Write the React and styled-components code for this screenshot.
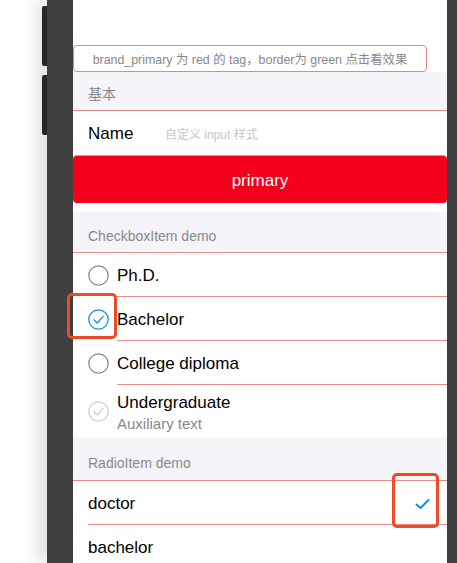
import React from 'react';
import styled, { createGlobalStyle } from 'styled-components';

const GlobalStyle = createGlobalStyle`
	html, body {
		margin: 0;
		padding: 0;
		background: #fff;
		overflow: hidden;
	}
	body {
		font-family: "Liberation Sans", "Noto Sans CJK SC", sans-serif;
	}
`;

const Stage = styled.div`
	display: flex;
	height: 563px;
	width: 457px;
	overflow: hidden;
`;

const Side = styled.div`
	width: 47px;
	display: flex;
	flex-direction: column;
	align-items: flex-end;
	padding-top: 6px;
	gap: 9px;
	box-sizing: border-box;
`;

const SideKey = styled.div`
	width: 5px;
	height: 60px;
	background: #2c2c2c;
	border-radius: 2px 0 0 2px;
`;

const Bezel = styled.div`
	width: ${(props) => props.w}px;
	background: #3f3f3f;
	box-shadow: ${(props) => (props.left ? '-10px 0 18px rgba(0,0,0,0.12)' : 'none')};
	flex-shrink: 0;
`;

const Screen = styled.div`
	width: 374px;
	flex-shrink: 0;
	display: flex;
	flex-direction: column;
	background: #fff;
	position: relative;

	& > * {
		flex-shrink: 0;
	}
`;

const Top = styled.div`
	height: 45px;
`;

const Tag = styled.div`
	width: 354px;
	height: 27px;
	box-sizing: border-box;
	border: 1px solid #e28585;
	border-radius: 4px;
	display: flex;
	align-items: center;
	justify-content: center;
	font-size: 12.4px;
	color: #888;
`;

const Header = styled.div`
	height: ${(props) => props.h}px;
	box-sizing: border-box;
	background: #f5f5f9;
	border-bottom: 1px solid #e68a8a;
	display: flex;
	align-items: flex-end;
	padding: 0 0 ${(props) => props.pb}px 15px;
	font-size: 14px;
	color: #888;
`;

const Row = styled.div`
	position: relative;
	height: ${(props) => props.h || 44}px;
	display: flex;
	align-items: center;
	padding-left: 15px;
`;

const Line = styled.div`
	display: flex;
	flex: 1;
	align-self: stretch;
	align-items: center;
	border-bottom: ${(props) => (props.last ? 'none' : '1px solid #e68a8a')};
	font-size: 17px;
	color: #000;
	padding: 2px 15px 0 0;
`;

const Label = styled.span`
	width: 77px;
	font-size: 17px;
	color: #000;
	padding-top: 2px;
`;

const Placeholder = styled.span`
	font-size: 12px;
	color: #c7c7c7;
`;

const Primary = styled.div`
	height: 48px;
	box-sizing: border-box;
	border-top: 1px solid #f29090;
	background: #f5001a;
	border-radius: 4px;
	color: #fff;
	font-size: 17px;
	display: flex;
	align-items: center;
	justify-content: center;
	padding-top: 2px;
`;

const Gap = styled.div`
	height: 9px;
`;

const Box = styled.span`
	width: 29px;
	display: flex;
	align-items: center;
	flex-shrink: 0;
`;

const Texts = styled.div`
	display: flex;
	flex-direction: column;
	justify-content: center;
	gap: 2px;
`;

const Brief = styled.span`
	font-size: 15px;
	color: #888;
`;

const Mark = styled.div`
	position: absolute;
	left: ${(props) => props.x}px;
	top: ${(props) => props.y}px;
	width: ${(props) => props.w}px;
	height: ${(props) => props.h}px;
	box-sizing: border-box;
	border: 3px solid #ee4b24;
	border-radius: 5px;
`;

const Check = styled.span`
	margin-left: auto;
	margin-right: 2px;
	display: flex;
`;

const CircleCheck = ({ state }) => {
	const color = state === 'on' ? '#108ee9' : state === 'off' ? '#cfcfcf' : '#888';
	return (
		<svg width="21" height="21" viewBox="0 0 21 21">
			<circle cx="10.5" cy="10.5" r="9.7" fill="none" stroke={color} strokeWidth="1.3" />
			{state !== 'empty' && (
				<path d="M6 10.8 L9.2 14 L15.2 7.4" fill="none" stroke={color} strokeWidth="1.3" strokeLinecap="round" strokeLinejoin="round" />
			)}
		</svg>
	);
};

const Tick = () => (
	<svg width="15" height="12" viewBox="0 0 15 12">
		<path d="M1.5 6.5 L5.5 10 L13.5 2" fill="none" stroke="#108ee9" strokeWidth="2" strokeLinecap="round" strokeLinejoin="round" />
	</svg>
);

const checkItems = [
	{ label: 'Ph.D.', state: 'empty' },
	{ label: 'Bachelor', state: 'on', mark: true },
	{ label: 'College diploma', state: 'empty' },
];

const App = () => {
	return (
		<>
			<GlobalStyle />
			<Stage>
				<Side>
					<SideKey />
					<SideKey />
				</Side>
				<Bezel w={26} left />
				<Screen>
					<Top />
					<Tag>brand_primary 为 red 的 tag，border为 green 点击看效果</Tag>
					<Header h={39} pb={7}>基本</Header>
					<Row>
						<Label>Name</Label>
						<Placeholder>自定义 input 样式</Placeholder>
					</Row>
					<Primary>primary</Primary>
					<Gap />
					<Header h={41} pb={8}>CheckboxItem demo</Header>
					{checkItems.map((item, index) => (
						<Row key={index}>
							<Box>
								<CircleCheck state={item.state} />
							</Box>
							<Line>{item.label}</Line>
							{item.mark && <Mark x={-6} y={-4} w={50} h={46} />}
						</Row>
					))}
					<Row h={52}>
						<Box>
							<CircleCheck state="off" />
						</Box>
						<Line last>
							<Texts>
								<span>Undergraduate</span>
								<Brief>Auxiliary text</Brief>
							</Texts>
						</Line>
					</Row>
					<Header h={44} pb={9}>RadioItem demo</Header>
					<Row>
						<Line>
							doctor
							<Check>
								<Tick />
							</Check>
						</Line>
						<Mark x={319} y={-8} w={47} h={55} />
					</Row>
					<Row>
						<Line last>bachelor</Line>
					</Row>
				</Screen>
				<Bezel w={10} />
			</Stage>
		</>
	);
};

export default App;
